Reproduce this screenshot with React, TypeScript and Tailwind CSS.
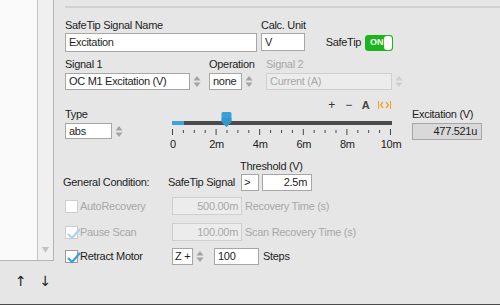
import React from "react";

const Spin = ({ dim }: { dim?: boolean }) => (
  <svg width="8" height="13" viewBox="0 0 8 13" className="ml-[3px] shrink-0">
    <path d="M4 1 L7.5 5.5 H0.5 Z" fill={dim ? "#cfcfcf" : "#a3a3a3"} />
    <path d="M4 12 L7.5 7.5 H0.5 Z" fill={dim ? "#cfcfcf" : "#a3a3a3"} />
  </svg>
);

const Check = ({ checked, disabled }: { checked?: boolean; disabled?: boolean }) => (
  <div
    className={`relative w-[13px] h-[13px] border bg-white shrink-0 ${
      disabled ? "border-[#cdcdcd] bg-[#f0f0f0]" : "border-[#9a9a9a]"
    }`}
  >
    {checked && (
      <svg width="15" height="12" viewBox="0 0 15 12" className="absolute left-[1px] top-[1px]">
        <path
          d="M1 6 L5 10 L13 1"
          fill="none"
          stroke={disabled ? "#a9d2ee" : "#3d9bdc"}
          strokeWidth="2.2"
        />
      </svg>
    )}
  </div>
);

const ticks = Array.from({ length: 21 }, (_, i) => i);
const tickLabels = ["0", "2m", "4m", "6m", "8m", "10m"];

const Slider = () => (
  <div className="relative w-[220px]">
    <div className="flex justify-end items-center gap-[8px] h-[14px] pr-[1px] text-[12px] text-[#333]">
      <span className="w-[9px] text-center">+</span>
      <span className="w-[9px] text-center">−</span>
      <span className="w-[9px] text-center font-bold text-[11px] text-[#444]">A</span>
      <svg width="13" height="8" viewBox="0 0 13 8">
        <path d="M0.5 0 V8 M12.5 0 V8" stroke="#f0a028" strokeWidth="1" />
        <path d="M5 1 L2.5 4 L5 7 M8 1 L10.5 4 L8 7" fill="none" stroke="#f0a028" strokeWidth="1.2" />
      </svg>
    </div>
    <svg width="222" height="26" viewBox="0 0 222 26" className="block">
      <rect x="0" y="9" width="220" height="4" fill="#4b4b4b" />
      <rect x="0" y="9" width="12" height="4" fill="#3da3dd" />
      {ticks.map((i) => {
        const x = 0.5 + i * 10.9;
        const major = i % 4 === 0;
        return (
          <line
            key={i}
            x1={x}
            x2={x}
            y1={major ? 17 : 18}
            y2={major ? 23 : 21}
            stroke="#444"
            strokeWidth="1"
          />
        );
      })}
      <path
        d="M49.5 1.5 Q49.5 0 51 0 H58 Q59.5 0 59.5 1.5 V10 L54.5 15 L49.5 10 Z"
        fill="#3aa0d8"
      />
      <path d="M49.5 6 V10 L54.5 15 L59.5 10 V6 Z" fill="#2a8cc6" opacity="0.5" />
    </svg>
    <div className="relative h-[13px] text-[11px] text-[#222]">
      {tickLabels.map((t, i) => (
        <span
          key={t}
          className="absolute top-0 w-[30px] text-center leading-[13px]"
          style={{ left: i * 43.6 - 15 + 1 }}
        >
          {t}
        </span>
      ))}
    </div>
  </div>
);

export default function App() {
  return (
    <div className="w-[500px] h-[305px] bg-[#e6e6e6] font-['Liberation_Sans',Arial,sans-serif] text-[11px] leading-[13px] text-[#1e1e1e] tracking-[-0.3px] overflow-hidden">
      <div className="flex h-[304px]">
        <div className="w-[54px] shrink-0 flex flex-col">
          <div className="h-[261px] flex border-r border-b border-[#b4b4b4]">
            <div className="w-[37px] bg-[#fafafa]" />
            <div className="flex-1 bg-[#f0f0f0] border-l border-[#c2c2c2] flex flex-col justify-end items-center pb-[7px]">
              <svg width="7" height="6" viewBox="0 0 7 6">
                <path d="M0 0 H7 L3.5 6 Z" fill="#c2c2c2" />
              </svg>
            </div>
          </div>
          <div className="flex gap-[13px] pl-[15px] pt-[12px] text-[14px] leading-[16px] font-['DejaVu_Sans',sans-serif] text-[#222]">
            <span>↑</span>
            <span>↓</span>
          </div>
        </div>

        <div className="flex-1 pt-[6px] pl-[11px]">
          <div className="h-[2px] bg-[#d0d0d0]" />

          {/* row 1 */}
          <div className="flex mt-[11px]">
            <div className="w-[192px]">
              <div className="mb-[1px]">SafeTip Signal Name</div>
              <div className="h-[19px] bg-white border border-[#a6a6a6] px-[3px] flex items-center">
                Excitation
              </div>
            </div>
            <div className="ml-[4px]">
              <div className="mb-[1px]">Calc. Unit</div>
              <div className="w-[44px] h-[18px] bg-white border border-[#a6a6a6] px-[3px] flex items-center">
                V
              </div>
            </div>
            <div className="ml-[20px] self-end h-[19px] flex items-center">
              <span>SafeTip</span>
              <div className="ml-[4px] w-[28px] h-[16px] rounded-[3px] bg-[#1cb51c] border border-[#1cb51c] flex items-center">
                <span className="pl-[4px] text-[9px] font-bold text-white tracking-normal">ON</span>
                <div className="ml-auto w-[8px] h-[14px] rounded-[3px] bg-white" />
              </div>
            </div>
          </div>

          {/* row 2 */}
          <div className="flex mt-[6px]">
            <div className="w-[144px]">
              <div className="mb-[2px]">Signal 1</div>
              <div className="flex items-center">
                <div className="w-[125px] h-[17px] bg-white border border-[#a6a6a6] px-[3px] flex items-center">
                  OC M1 Excitation (V)
                </div>
                <Spin />
              </div>
            </div>
            <div className="w-[57px]">
              <div className="mb-[2px]">Operation</div>
              <div className="flex items-center">
                <div className="w-[33px] h-[17px] bg-white border border-[#a6a6a6] px-[3px] flex items-center">
                  none
                </div>
                <Spin />
              </div>
            </div>
            <div>
              <div className="mb-[2px] text-[#a8a8a8]">Signal 2</div>
              <div className="flex items-center">
                <div className="w-[126px] h-[17px] bg-[#ececec] border border-[#cfcfcf] px-[3px] flex items-center text-[#a8a8a8]">
                  Current (A)
                </div>
                <Spin dim />
              </div>
            </div>
          </div>

          {/* row 3 */}
          <div className="flex mt-[8px]">
            <div className="w-[107px] pt-[10px]">
              <div className="mb-[2px]">Type</div>
              <div className="flex items-center">
                <div className="w-[47px] h-[16px] bg-white border border-[#a6a6a6] px-[3px] flex items-center">
                  abs
                </div>
                <Spin />
              </div>
            </div>
            <Slider />
            <div className="ml-[20px] pt-[10px]">
              <div className="mb-[2px]">Excitation (V)</div>
              <div className="w-[70px] h-[17px] bg-[#d9d9d9] border border-[#a6a6a6] px-[4px] flex items-center justify-end">
                477.521u
              </div>
            </div>
          </div>

          {/* row 4 */}
          <div className="mt-[9px] pl-[175px]">Threshold (V)</div>
          <div className="flex items-center h-[18px]">
            <div className="w-[105px] ml-[-2px]">General Condition:</div>
            <div className="w-[73px]">SafeTip Signal</div>
            <div className="w-[18px] h-[17px] bg-white border border-[#a6a6a6] px-[2px] flex items-center">
              &gt;
            </div>
            <div className="ml-[3px] w-[50px] h-[17px] bg-white border border-[#a6a6a6] px-[4px] flex items-center justify-end">
              2.5m
            </div>
          </div>

          {/* row 5 */}
          <div className="flex items-center h-[18px] mt-[6px] text-[#a8a8a8]">
            <div className="w-[107px] flex items-center">
              <Check disabled />
              <span className="ml-[2px]">AutoRecovery</span>
            </div>
            <div className="w-[70px] h-[18px] bg-[#ececec] border border-[#cfcfcf] px-[3px] flex items-center justify-end">
              500.00m
            </div>
            <span className="ml-[3px]">Recovery Time (s)</span>
          </div>

          {/* row 6 */}
          <div className="flex items-center h-[18px] mt-[8px] text-[#a8a8a8]">
            <div className="w-[107px] flex items-center">
              <Check checked disabled />
              <span className="ml-[2px]">Pause Scan</span>
            </div>
            <div className="w-[70px] h-[18px] bg-[#ececec] border border-[#cfcfcf] px-[3px] flex items-center justify-end">
              100.00m
            </div>
            <span className="ml-[3px]">Scan Recovery Time (s)</span>
          </div>

          {/* row 7 */}
          <div className="flex items-center h-[17px] mt-[7px]">
            <div className="w-[107px] flex items-center">
              <Check checked />
              <span className="ml-[2px]">Retract Motor</span>
            </div>
            <div className="w-[21px] h-[17px] bg-white border border-[#a6a6a6] px-[2px] flex items-center whitespace-pre">
              Z +
            </div>
            <Spin />
            <div className="ml-[10px] w-[45px] h-[17px] bg-white border border-[#a6a6a6] px-[3px] flex items-center">
              100
            </div>
            <span className="ml-[4px]">Steps</span>
          </div>
        </div>
      </div>
      <div className="h-[1px] bg-[#4a4a4a]" />
    </div>
  );
}
